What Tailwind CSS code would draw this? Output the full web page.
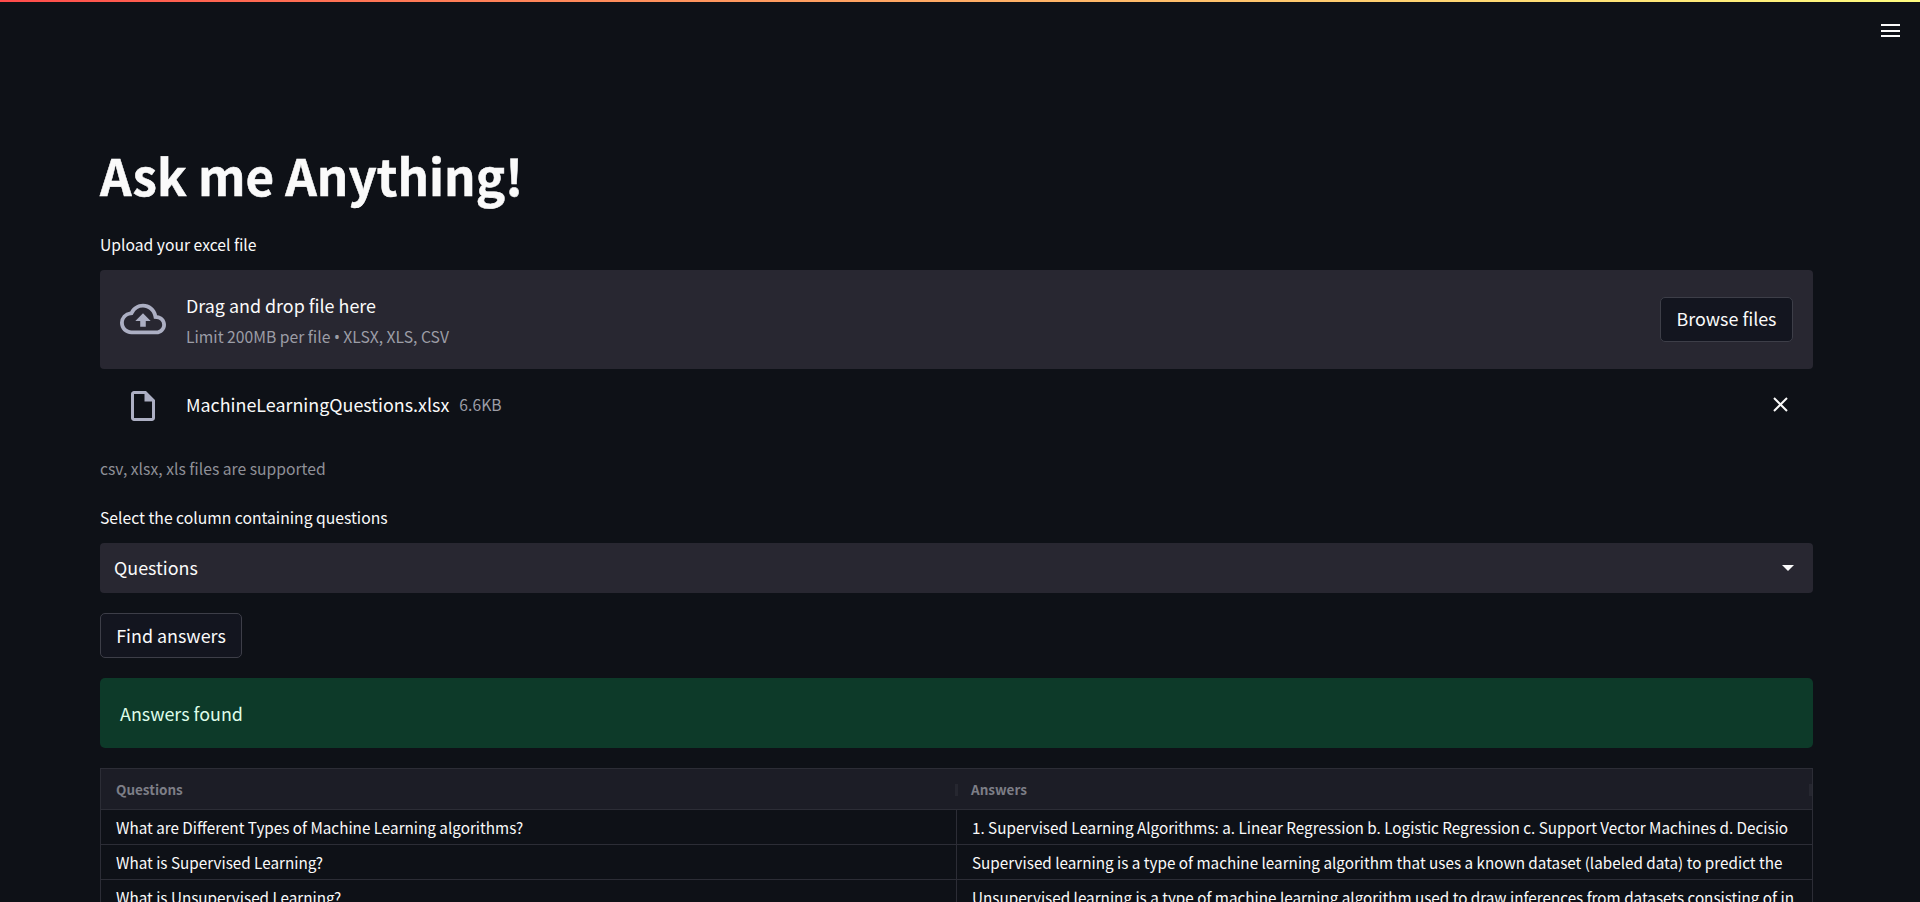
<!DOCTYPE html>
<html lang="en">
<head>
  <meta charset="UTF-8" />
  <title>Ask me Anything</title>
  <script src="https://cdn.jsdelivr.net/npm/@tailwindcss/browser@4"></script>
</head>
<body class="bg-[#0e1117] text-[#fafafa] h-[902px] overflow-hidden font-['Noto_Sans_CJK_SC',sans-serif]">
  <div class="h-0.5 bg-gradient-to-r from-[#ff4b4b] to-[#fffd80]"></div>
  <header class="h-[60px] flex justify-end pt-[22px] pr-5">
    <div class="w-[19px] flex flex-col gap-[3.5px]">
      <span class="h-[2px] bg-[#fafafa]"></span>
      <span class="h-[2px] bg-[#fafafa]"></span>
      <span class="h-[2px] bg-[#fafafa]"></span>
    </div>
  </header>
  <main class="pl-[100px] pr-[107px] pt-[77px]">
    <h1 class="text-[49.3px] leading-[72px] font-bold [-webkit-text-stroke:0.5px_#fafafa]">Ask me Anything!</h1>
    <p class="mt-[22px] text-[15.7px] leading-6">Upload your excel file</p>
    <section class="mt-[13px] h-[99px] rounded bg-[#282731] flex items-center pl-5 pr-5">
      <svg class="mb-[2px]" width="46" height="46" viewBox="0 0 24 24" fill="#acafc3"><path d="M19.35 10.04A7.49 7.49 0 0 0 12 4C9.11 4 6.6 5.64 5.35 8.04A5.994 5.994 0 0 0 0 14c0 3.31 2.69 6 6 6h13c2.76 0 5-2.24 5-5 0-2.64-2.05-4.78-4.65-4.96zM19 18H6c-2.21 0-4-1.79-4-4 0-2.05 1.53-3.76 3.56-3.97l1.07-.11.5-.95A5.469 5.469 0 0 1 12 6c2.62 0 4.88 1.86 5.39 4.43l.3 1.5 1.53.11A2.98 2.98 0 0 1 22 15c0 1.65-1.35 3-3 3zM8 13h2.55v3h2.9v-3H16l-4-4z"/></svg>
      <div class="ml-5 flex-1">
        <p class="text-[17.9px] leading-7">Drag and drop file here</p>
        <p class="text-[15.7px] leading-6 mt-[6px] text-[#9c9da6]">Limit 200MB per file <span class="font-['Noto_Sans']">•</span> XLSX, XLS, CSV</p>
      </div>
      <button class="h-[45px] w-[133px] pb-0.5 rounded-[5px] border border-[#3d3e48] bg-[#13151f] text-[17.9px]">Browse files</button>
    </section>
    <div class="h-[74px] flex items-center pl-[25px] pr-[25px]">
      <svg width="36" height="36" viewBox="0 0 24 24" fill="#acafc3"><path d="M14 2H6c-1.1 0-2 .9-2 2v16c0 1.1.9 2 2 2h12c1.1 0 2-.9 2-2V8l-6-6zM6 20V4h7v5h5v11H6z"/></svg>
      <span class="ml-[25px] mb-[3px] text-[17.9px]">MachineLearningQuestions.xlsx</span>
      <span class="ml-[10px] mb-[2px] text-[15.7px] text-[#9c9da6] flex-1">6.6KB</span>
      <svg class="mb-[4px]" width="15" height="15" viewBox="0 0 15 15" stroke="#fafafa" stroke-width="2"><path d="M1 1l13 13M14 1L1 14"/></svg>
    </div>
    <p class="mt-[14px] text-[15.7px] leading-6 text-[#8f9098]">csv, xlsx, xls files are supported</p>
    <p class="mt-[25px] text-[15.7px] leading-6">Select the column containing questions</p>
    <div class="mt-[13px] h-[50px] rounded bg-[#282731] flex items-center justify-between pl-[14px] pr-[19px]">
      <span class="mb-[2px] text-[17.9px]">Questions</span>
      <span class="w-0 h-0 border-x-[6px] border-x-transparent border-t-[6px] border-t-[#fafafa]"></span>
    </div>
    <button class="mt-5 block h-[45px] w-[142px] rounded-[5px] border border-[#3d3e48] bg-[#13151f] text-[17.9px]">Find answers</button>
    <div class="mt-[20px] h-[70px] rounded-[5px] bg-[#0d3a29] text-[#dffde9] flex items-center px-5 text-[17.9px]">Answers found</div>
    <div class="relative mt-5 border border-[#2c2d36] grid grid-cols-[855px_minmax(0,1fr)] text-[15.25px]">
      <div class="h-[41px] bg-[#1c1d26] text-[#7d7e87] text-[13.5px] font-semibold flex items-center pl-[15px] border-b border-[#2c2d36]">Questions</div>
      <div class="h-[41px] bg-[#1c1d26] text-[#7d7e87] text-[13.5px] font-semibold flex items-center pl-[15px] border-b border-[#2c2d36]">Answers</div>
      <div class="h-[35px] flex items-center pl-[15px] border-b border-[#2c2d36]">What are Different Types of Machine Learning algorithms?</div>
      <div class="h-[35px] flex items-center pl-[15px] border-b border-l border-[#2c2d36] overflow-hidden whitespace-nowrap">1. Supervised Learning Algorithms: a. Linear Regression b. Logistic Regression c. Support Vector Machines d. Decisio</div>
      <div class="h-[35px] flex items-center pl-[15px] border-b border-[#2c2d36]">What is Supervised Learning?</div>
      <div class="h-[35px] flex items-center pl-[15px] border-b border-l border-[#2c2d36] overflow-hidden whitespace-nowrap">Supervised learning is a type of machine learning algorithm that uses a known dataset (labeled data) to predict the</div>
      <div class="h-[35px] flex items-center pl-[15px]">What is Unsupervised Learning?</div>
      <div class="h-[35px] flex items-center pl-[15px] border-l border-[#2c2d36] overflow-hidden whitespace-nowrap">Unsupervised learning is a type of machine learning algorithm used to draw inferences from datasets consisting of in</div>
      <span class="absolute left-[854px] top-[15px] w-[3px] h-[12px] bg-[#262730]"></span>
      <span class="absolute right-0 top-[15px] w-[3px] h-[12px] bg-[#262730]"></span>
    </div>
  </main>
</body>
</html>
